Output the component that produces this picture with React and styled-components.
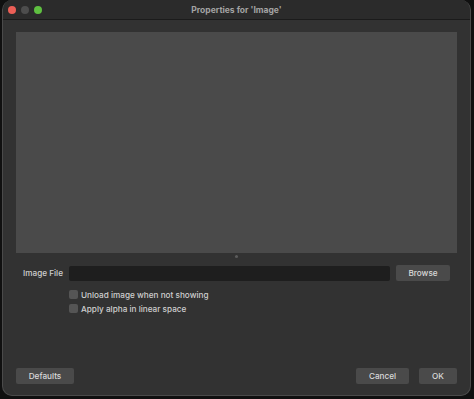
import React from 'react';
import styled, { createGlobalStyle } from 'styled-components';

const GlobalStyle = createGlobalStyle`
    html, body {
        margin: 0;
        padding: 0;
        background: #101010;
    }
    body {
        font-family: Inter, "Noto Sans", "Liberation Sans", sans-serif;
    }
`;

const Desktop = styled.div`
    width: 474px;
    height: 399px;
    padding: 0 3px 0 2px;
    box-sizing: border-box;
`;

const Window = styled.div`
    display: flex;
    flex-direction: column;
    height: 396px;
    background: #323232;
    border: 1px solid #4a4a4a;
    border-top: none;
    border-radius: 10px;
    box-sizing: border-box;
    overflow: hidden;
`;

const TitleBar = styled.div`
    display: grid;
    grid-template-columns: 1fr auto 1fr;
    align-items: center;
    height: 19px;
    background: #2b2b2b;
    border-bottom: 1px solid #1b1b1b;
    padding: 0 5px;
    flex-shrink: 0;
`;

const Lights = styled.div`
    display: flex;
    gap: 5px;
`;

const Light = styled.span`
    width: 8px;
    height: 8px;
    border-radius: 50%;
    background: ${p => p.color};
`;

const Title = styled.div`
    font-size: 8.5px;
    font-weight: 700;
    color: #a3a3a3;
`;

const Body = styled.div`
    flex: 1;
    display: flex;
    flex-direction: column;
    padding: 12px 13px 11px 13px;
`;

const Preview = styled.div`
    height: 221px;
    background: #4a4a4a;
`;

const Splitter = styled.div`
    height: 12px;
    display: flex;
    justify-content: center;
    padding-top: 2px;
    box-sizing: border-box;
`;

const Handle = styled.span`
    width: 3px;
    height: 3px;
    border-radius: 50%;
    background: #5c5c5c;
`;

const FileRow = styled.div`
    display: flex;
    align-items: center;
    height: 16px;
    padding-left: 7px;
    padding-right: 7px;
`;

const Label = styled.span`
    font-size: 8.2px;
    font-weight: 500;
    color: #cfcfcf;
    width: 46px;
    flex-shrink: 0;
    white-space: nowrap;
`;

const PathInput = styled.div`
    flex: 1;
    height: 15px;
    background: #1e1e1e;
    border-radius: 2px;
    margin-right: 6px;
`;

const Button = styled.button`
    height: 16px;
    width: ${p => p.w}px;
    margin-left: ${p => p.gap || 0}px;
    padding: 0;
    border: none;
    border-radius: 2px;
    background: #4a4a4a;
    color: #d9d9d9;
    font-family: inherit;
    font-size: 8.2px;
    font-weight: 500;
    flex-shrink: 0;
`;

const Checks = styled.div`
    display: flex;
    flex-direction: column;
    gap: 5px;
    margin-top: 9px;
    padding-left: 53px;
`;

const CheckRow = styled.label`
    display: flex;
    align-items: center;
    gap: 3px;
    height: 9px;
    font-size: 8.2px;
    font-weight: 500;
    color: #cfcfcf;
    white-space: nowrap;
`;

const Box = styled.span`
    width: 9px;
    height: 9px;
    border-radius: 2px;
    background: #555;
`;

const Footer = styled.div`
    margin-top: auto;
    display: flex;
    align-items: center;
`;

const Spacer = styled.div`
    flex: 1;
`;

const App = () => {
    return (
        <>
            <GlobalStyle />
            <Desktop>
                <Window>
                    <TitleBar>
                        <Lights>
                            <Light color="#ec5f57" />
                            <Light color="#4d4d4d" />
                            <Light color="#5fc041" />
                        </Lights>
                        <Title>Properties for 'Image'</Title>
                        <div />
                    </TitleBar>
                    <Body>
                        <Preview />
                        <Splitter>
                            <Handle />
                        </Splitter>
                        <FileRow>
                            <Label>Image File</Label>
                            <PathInput />
                            <Button w={54}>Browse</Button>
                        </FileRow>
                        <Checks>
                            <CheckRow><Box />Unload image when not showing</CheckRow>
                            <CheckRow><Box />Apply alpha in linear space</CheckRow>
                        </Checks>
                        <Footer>
                            <Button w={58}>Defaults</Button>
                            <Spacer />
                            <Button w={53}>Cancel</Button>
                            <Button w={38} gap={10}>OK</Button>
                        </Footer>
                    </Body>
                </Window>
            </Desktop>
        </>
    );
};

export default App;
